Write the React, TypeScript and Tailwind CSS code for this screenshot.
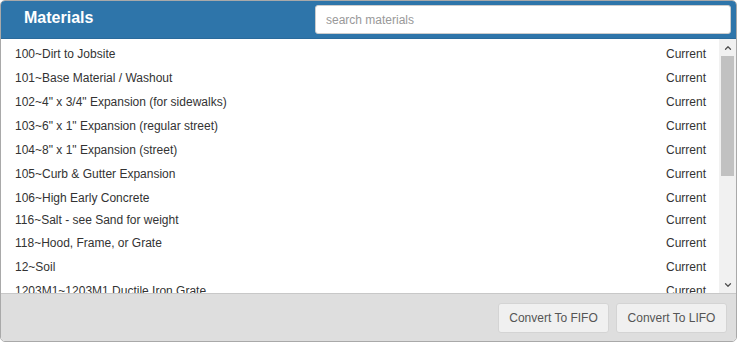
import { ChevronUp, ChevronDown } from 'lucide-react'

const materials = [
  { name: '100~Dirt to Jobsite', h: 'h-[24px]' },
  { name: '101~Base Material / Washout', h: 'h-[24px]' },
  { name: '102~4" x 3/4" Expansion (for sidewalks)', h: 'h-[24px]' },
  { name: '103~6" x 1" Expansion (regular street)', h: 'h-[24px]' },
  { name: '104~8" x 1" Expansion (street)', h: 'h-[24px]' },
  { name: '105~Curb & Gutter Expansion', h: 'h-[24px]' },
  { name: '106~High Early Concrete', h: 'h-[22px] pt-[2px]' },
  { name: '116~Salt - see Sand for weight', h: 'h-[23px]' },
  { name: '118~Hood, Frame, or Grate', h: 'h-[24px]' },
  { name: '12~Soil', h: 'h-[24px]' },
  { name: '1203M1~1203M1 Ductile Iron Grate', h: 'h-[24px]' },
]

export default function App() {
  return (
    <div className="w-[737px] h-[342px] bg-white font-['Liberation_Sans',Arial,sans-serif]">
      <div className="w-full h-full flex flex-col border border-[#a9a9a9] rounded-[5px] overflow-hidden">
        <div className="h-[38px] shrink-0 bg-[#2e75aa] flex items-center justify-between pl-[23px] pr-[5px] border-b border-[#2a6a9b]">
          <h1 className="text-white font-bold text-[16px] leading-none mb-[3px]">Materials</h1>
          <input
            placeholder="search materials"
            className="w-[416px] h-[29px] bg-white rounded-[3px] border border-[#ccc] px-[10px] text-[12px] text-[#333] placeholder:text-[#999] outline-none"
          />
        </div>

        <div className="flex-1 flex min-h-0 bg-white">
          <div className="flex-1 overflow-hidden pt-[3px] pl-[14px] pr-[13px] text-[12px] text-[#333]">
            {materials.map((m) => (
              <div key={m.name} className={`flex items-center justify-between ${m.h}`}>
                <span>{m.name}</span>
                <span>Current</span>
              </div>
            ))}
          </div>
          <div className="w-[17px] shrink-0 bg-[#f1f1f1] flex flex-col">
            <div className="h-[17px] flex items-center justify-center text-[#505050]">
              <ChevronUp size={10} strokeWidth={3} />
            </div>
            <div className="mx-[2px] h-[120px] bg-[#c1c1c1]" />
            <div className="flex-1" />
            <div className="h-[17px] flex items-center justify-center text-[#505050]">
              <ChevronDown size={10} strokeWidth={3} />
            </div>
          </div>
        </div>

        <div className="h-[48px] shrink-0 bg-[#dedede] border-t border-[#c8c8c8] flex items-center justify-end gap-[7px] pr-[9px]">
          <button className="w-[111px] h-[30px] rounded-[3px] bg-[#f0f0f0] border border-[#d4d4d4] text-[12px] text-[#555]">
            Convert To FIFO
          </button>
          <button className="w-[111px] h-[30px] rounded-[3px] bg-[#f0f0f0] border border-[#d4d4d4] text-[12px] text-[#555]">
            Convert To LIFO
          </button>
        </div>
      </div>
    </div>
  )
}
